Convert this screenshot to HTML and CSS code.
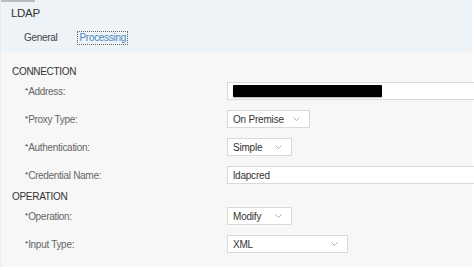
FILE: index.html
```html
<!DOCTYPE html>
<html>
<head>
<meta charset="utf-8">
<link rel="stylesheet" href="styles.css">
</head>
<body>
<div class="panel">
  <div class="header">
    <div class="topline"></div>
    <div class="title">LDAP</div>
    <div class="tabs">
      <span class="tab">General</span>
      <span class="tab active">Processing</span>
    </div>
  </div>
  <div class="content">
    <div class="section">CONNECTION</div>
    <div class="row">
      <label class="label"><span class="req">*</span>Address:</label>
      <div class="field input wide"><span class="redact"></span></div>
    </div>
    <div class="row">
      <label class="label"><span class="req">*</span>Proxy Type:</label>
      <div class="field select w83"><span>On Premise</span><svg class="chev" width="7" height="4" viewBox="0 0 7 4"><path d="M0.5 0.5 L3.5 3.5 L6.5 0.5" fill="none" stroke="#9a9a9a" stroke-width="0.8"/></svg></div>
    </div>
    <div class="row">
      <label class="label"><span class="req">*</span>Authentication:</label>
      <div class="field select w65"><span>Simple</span><svg class="chev" width="7" height="4" viewBox="0 0 7 4"><path d="M0.5 0.5 L3.5 3.5 L6.5 0.5" fill="none" stroke="#9a9a9a" stroke-width="0.8"/></svg></div>
    </div>
    <div class="row">
      <label class="label"><span class="req">*</span>Credential Name:</label>
      <div class="field input wide"><span>ldapcred</span></div>
    </div>
    <div class="section op">OPERATION</div>
    <div class="row">
      <label class="label"><span class="req">*</span>Operation:</label>
      <div class="field select w65"><span>Modify</span><svg class="chev" width="7" height="4" viewBox="0 0 7 4"><path d="M0.5 0.5 L3.5 3.5 L6.5 0.5" fill="none" stroke="#9a9a9a" stroke-width="0.8"/></svg></div>
    </div>
    <div class="row">
      <label class="label"><span class="req">*</span>Input Type:</label>
      <div class="field select w121"><span>XML</span><svg class="chev" width="7" height="4" viewBox="0 0 7 4"><path d="M0.5 0.5 L3.5 3.5 L6.5 0.5" fill="none" stroke="#9a9a9a" stroke-width="0.8"/></svg></div>
    </div>
  </div>
</div>
</body>
</html>
```
FILE: styles.css
```css
html, body {
  margin: 0;
  padding: 0;
  background: #ffffff;
}
body {
  font-family: "Liberation Sans", Arial, sans-serif;
  width: 474px;
  height: 270px;
  overflow: hidden;
}
.panel {
  width: 472px;
  border-left: 1px solid #ececec;
  box-sizing: border-box;
}
.header {
  height: 52px;
  background: #eef3f8;
  box-shadow: 0 1px 1px rgba(0,0,0,0.05);
  overflow: hidden;
}
.topline {
  width: 35px;
  height: 2px;
  background: #b8bcc0;
  margin-left: -1px;
}
.title {
  font-size: 11.5px;
  letter-spacing: -0.3px;
  color: #333333;
  padding: 4px 0 0 10px;
  line-height: 14px;
}
.tabs {
  display: flex;
  gap: 22px;
  padding: 12px 0 0 23px;
  font-size: 10px;
  letter-spacing: -0.3px;
  line-height: 12px;
}
.tab {
  color: #444444;
}
.tab.active {
  color: #4a88bb;
  outline: 1px dotted #666666;
  outline-offset: 0px;
  padding: 0 1px;
  margin-left: -1px;
}
.content {
  background: #f7f7f7;
  height: 215px;
  padding: 14px 0 0 0;
  box-sizing: border-box;
}
.section {
  font-size: 10px;
  letter-spacing: -0.3px;
  color: #333333;
  padding-left: 11px;
  line-height: 11px;
  height: 11px;
}
.section.op {
  margin-top: 2px;
}
.row {
  display: flex;
  align-items: center;
  height: 28px;
}
.label {
  width: 202px;
  padding-left: 24px;
  font-size: 10px;
  letter-spacing: -0.3px;
  color: #666666;
  line-height: 12px;
}
.req {
  color: #333333;
  font-size: 8px;
  vertical-align: 2px;
  letter-spacing: 0;
}
.field {
  box-sizing: border-box;
  height: 18px;
  background: #ffffff;
  border: 1px solid #d9d9d9;
  display: flex;
  align-items: center;
  padding-left: 5px;
  font-size: 10px;
  letter-spacing: -0.2px;
  color: #333333;
}
.wide {
  flex: 1;
  margin-right: -4px;
}
.select {
  justify-content: space-between;
  padding-right: 9px;
}
.w83 { width: 83px; }
.w65 { width: 65px; }
.w121 { width: 121px; }
.redact {
  display: block;
  width: 149px;
  height: 12px;
  background: #000000;
  border-radius: 1px;
  box-shadow: 0 1px 1px rgba(0,0,0,0.3);
}
.chev {
  display: block;
}
```
